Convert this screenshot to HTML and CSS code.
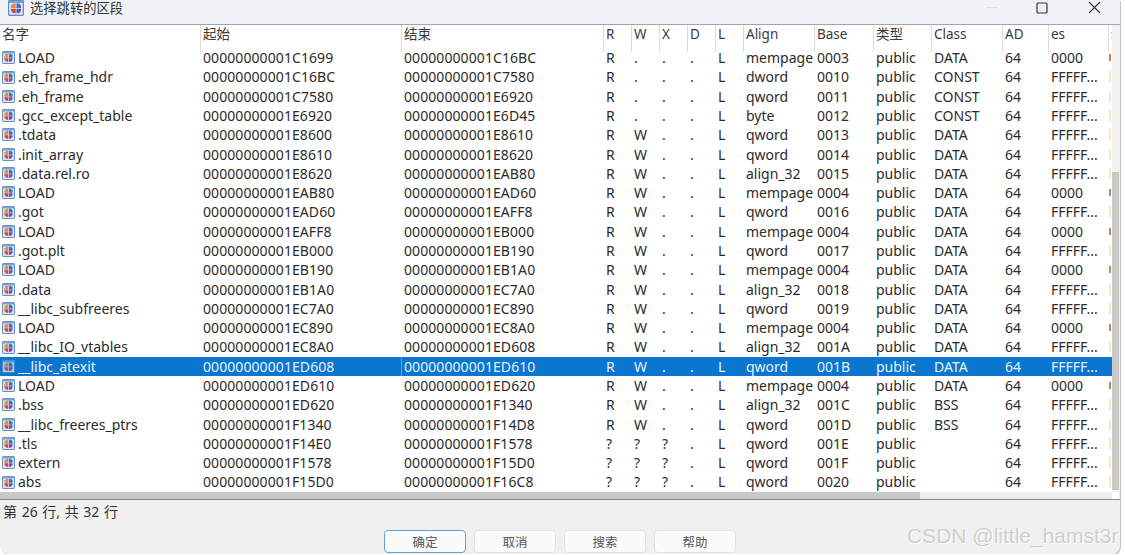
FILE: index.html
```html
<!DOCTYPE html>
<html lang="zh-CN">
<head>
  <meta charset="UTF-8">
  <meta name="viewport" content="width=device-width, initial-scale=1">
  <title>选择跳转的区段</title>
  <link rel="stylesheet" href="styles.css">
</head>
<body>

  <svg class="defs" width="0" height="0">
    <symbol id="seg" viewBox="0 0 16 16">
      <rect x="0.6" y="0.6" width="14.8" height="14.8" rx="0.8" fill="#dbe6f4" stroke="#5f8cc6" stroke-width="1.2"/>
      <rect x="1" y="1" width="14" height="2" fill="#7ba3d6"/>
      <path d="M7.7 3.4H5.2L3 5.6V8.2H7.7Z" fill="#ea8a3a"/>
      <path d="M8.5 3.4H11L13 5.6V8.2H8.5Z" fill="#3a72c6"/>
      <path d="M7.7 9H3V10.8L5.2 13.2H7.7Z" fill="#d9433a"/>
      <path d="M8.5 9H13V10.8L11 13.2H8.5Z" fill="#7a4aa6"/>
    </symbol>
  </svg>

  <div class="window">

    <div class="titlebar">
      <svg class="title-icon"><use href="#seg"/></svg>
      <span class="title-text">选择跳转的区段</span>
      <div class="caption">
        <svg class="cap-min" width="12" height="2"><rect width="12" height="1" fill="#dcdfe4"/></svg>
        <svg class="cap-max" width="12" height="12"><rect x="1" y="1" width="10" height="10" rx="1" fill="none" stroke="#333" stroke-width="1.2"/></svg>
        <svg class="cap-close" width="13" height="13"><path d="M1 1L12 12M12 1L1 12" stroke="#333" stroke-width="1.1"/></svg>
      </div>
    </div>

    <div class="list-wrap">
      <div class="list">
        <div class="head">
          <span>名字</span><span>起始</span><span>结束</span><span>R</span><span>W</span><span>X</span><span>D</span><span>L</span><span>Align</span><span>Base</span><span>类型</span><span>Class</span><span>AD</span><span>es</span><span>s</span>
        </div>
        <div class="rows">
          <div class="row"><span class="name"><svg class="icon"><use href="#seg"/></svg>LOAD</span><span>00000000001C1699</span><span>00000000001C16BC</span><span>R</span><span>.</span><span>.</span><span>.</span><span>L</span><span>mempage</span><span>0003</span><span>public</span><span>DATA</span><span>64</span><span>0000</span><i class="tick dark"></i></div>
          <div class="row"><span class="name"><svg class="icon"><use href="#seg"/></svg>.eh_frame_hdr</span><span>00000000001C16BC</span><span>00000000001C7580</span><span>R</span><span>.</span><span>.</span><span>.</span><span>L</span><span>dword</span><span>0010</span><span>public</span><span>CONST</span><span>64</span><span>FFFFF...</span><i class="tick"></i></div>
          <div class="row"><span class="name"><svg class="icon"><use href="#seg"/></svg>.eh_frame</span><span>00000000001C7580</span><span>00000000001E6920</span><span>R</span><span>.</span><span>.</span><span>.</span><span>L</span><span>qword</span><span>0011</span><span>public</span><span>CONST</span><span>64</span><span>FFFFF...</span><i class="tick"></i></div>
          <div class="row"><span class="name"><svg class="icon"><use href="#seg"/></svg>.gcc_except_table</span><span>00000000001E6920</span><span>00000000001E6D45</span><span>R</span><span>.</span><span>.</span><span>.</span><span>L</span><span>byte</span><span>0012</span><span>public</span><span>CONST</span><span>64</span><span>FFFFF...</span><i class="tick"></i></div>
          <div class="row"><span class="name"><svg class="icon"><use href="#seg"/></svg>.tdata</span><span>00000000001E8600</span><span>00000000001E8610</span><span>R</span><span>W</span><span>.</span><span>.</span><span>L</span><span>qword</span><span>0013</span><span>public</span><span>DATA</span><span>64</span><span>FFFFF...</span><i class="tick"></i></div>
          <div class="row"><span class="name"><svg class="icon"><use href="#seg"/></svg>.init_array</span><span>00000000001E8610</span><span>00000000001E8620</span><span>R</span><span>W</span><span>.</span><span>.</span><span>L</span><span>qword</span><span>0014</span><span>public</span><span>DATA</span><span>64</span><span>FFFFF...</span><i class="tick"></i></div>
          <div class="row"><span class="name"><svg class="icon"><use href="#seg"/></svg>.data.rel.ro</span><span>00000000001E8620</span><span>00000000001EAB80</span><span>R</span><span>W</span><span>.</span><span>.</span><span>L</span><span>align_32</span><span>0015</span><span>public</span><span>DATA</span><span>64</span><span>FFFFF...</span><i class="tick"></i></div>
          <div class="row"><span class="name"><svg class="icon"><use href="#seg"/></svg>LOAD</span><span>00000000001EAB80</span><span>00000000001EAD60</span><span>R</span><span>W</span><span>.</span><span>.</span><span>L</span><span>mempage</span><span>0004</span><span>public</span><span>DATA</span><span>64</span><span>0000</span><i class="tick dark"></i></div>
          <div class="row"><span class="name"><svg class="icon"><use href="#seg"/></svg>.got</span><span>00000000001EAD60</span><span>00000000001EAFF8</span><span>R</span><span>W</span><span>.</span><span>.</span><span>L</span><span>qword</span><span>0016</span><span>public</span><span>DATA</span><span>64</span><span>FFFFF...</span><i class="tick"></i></div>
          <div class="row"><span class="name"><svg class="icon"><use href="#seg"/></svg>LOAD</span><span>00000000001EAFF8</span><span>00000000001EB000</span><span>R</span><span>W</span><span>.</span><span>.</span><span>L</span><span>mempage</span><span>0004</span><span>public</span><span>DATA</span><span>64</span><span>0000</span><i class="tick dark"></i></div>
          <div class="row"><span class="name"><svg class="icon"><use href="#seg"/></svg>.got.plt</span><span>00000000001EB000</span><span>00000000001EB190</span><span>R</span><span>W</span><span>.</span><span>.</span><span>L</span><span>qword</span><span>0017</span><span>public</span><span>DATA</span><span>64</span><span>FFFFF...</span><i class="tick"></i></div>
          <div class="row"><span class="name"><svg class="icon"><use href="#seg"/></svg>LOAD</span><span>00000000001EB190</span><span>00000000001EB1A0</span><span>R</span><span>W</span><span>.</span><span>.</span><span>L</span><span>mempage</span><span>0004</span><span>public</span><span>DATA</span><span>64</span><span>0000</span><i class="tick dark"></i></div>
          <div class="row"><span class="name"><svg class="icon"><use href="#seg"/></svg>.data</span><span>00000000001EB1A0</span><span>00000000001EC7A0</span><span>R</span><span>W</span><span>.</span><span>.</span><span>L</span><span>align_32</span><span>0018</span><span>public</span><span>DATA</span><span>64</span><span>FFFFF...</span><i class="tick"></i></div>
          <div class="row"><span class="name"><svg class="icon"><use href="#seg"/></svg>__libc_subfreeres</span><span>00000000001EC7A0</span><span>00000000001EC890</span><span>R</span><span>W</span><span>.</span><span>.</span><span>L</span><span>qword</span><span>0019</span><span>public</span><span>DATA</span><span>64</span><span>FFFFF...</span><i class="tick"></i></div>
          <div class="row"><span class="name"><svg class="icon"><use href="#seg"/></svg>LOAD</span><span>00000000001EC890</span><span>00000000001EC8A0</span><span>R</span><span>W</span><span>.</span><span>.</span><span>L</span><span>mempage</span><span>0004</span><span>public</span><span>DATA</span><span>64</span><span>0000</span><i class="tick dark"></i></div>
          <div class="row"><span class="name"><svg class="icon"><use href="#seg"/></svg>__libc_IO_vtables</span><span>00000000001EC8A0</span><span>00000000001ED608</span><span>R</span><span>W</span><span>.</span><span>.</span><span>L</span><span>align_32</span><span>001A</span><span>public</span><span>DATA</span><span>64</span><span>FFFFF...</span><i class="tick"></i></div>
          <div class="row selected"><span class="name"><svg class="icon"><use href="#seg"/></svg>__libc_atexit</span><span>00000000001ED608</span><span class="focus">00000000001ED610</span><span>R</span><span>W</span><span>.</span><span>.</span><span>L</span><span>qword</span><span>001B</span><span>public</span><span>DATA</span><span>64</span><span>FFFFF...</span></div>
          <div class="row"><span class="name"><svg class="icon"><use href="#seg"/></svg>LOAD</span><span>00000000001ED610</span><span>00000000001ED620</span><span>R</span><span>W</span><span>.</span><span>.</span><span>L</span><span>mempage</span><span>0004</span><span>public</span><span>DATA</span><span>64</span><span>0000</span><i class="tick dark"></i></div>
          <div class="row"><span class="name"><svg class="icon"><use href="#seg"/></svg>.bss</span><span>00000000001ED620</span><span>00000000001F1340</span><span>R</span><span>W</span><span>.</span><span>.</span><span>L</span><span>align_32</span><span>001C</span><span>public</span><span>BSS</span><span>64</span><span>FFFFF...</span><i class="tick"></i></div>
          <div class="row"><span class="name"><svg class="icon"><use href="#seg"/></svg>__libc_freeres_ptrs</span><span>00000000001F1340</span><span>00000000001F14D8</span><span>R</span><span>W</span><span>.</span><span>.</span><span>L</span><span>qword</span><span>001D</span><span>public</span><span>BSS</span><span>64</span><span>FFFFF...</span><i class="tick"></i></div>
          <div class="row"><span class="name"><svg class="icon"><use href="#seg"/></svg>.tls</span><span>00000000001F14E0</span><span>00000000001F1578</span><span>?</span><span>?</span><span>?</span><span>.</span><span>L</span><span>qword</span><span>001E</span><span>public</span><span></span><span>64</span><span>FFFFF...</span><i class="tick"></i></div>
          <div class="row"><span class="name"><svg class="icon"><use href="#seg"/></svg>extern</span><span>00000000001F1578</span><span>00000000001F15D0</span><span>?</span><span>?</span><span>?</span><span>.</span><span>L</span><span>qword</span><span>001F</span><span>public</span><span></span><span>64</span><span>FFFFF...</span><i class="tick"></i></div>
          <div class="row"><span class="name"><svg class="icon"><use href="#seg"/></svg>abs</span><span>00000000001F15D0</span><span>00000000001F16C8</span><span>?</span><span>?</span><span>?</span><span>.</span><span>L</span><span>qword</span><span>0020</span><span>public</span><span></span><span>64</span><span>FFFFF...</span><i class="tick"></i></div>
        </div>
        <div class="hscroll"><div class="hthumb"></div></div>
      </div>
      <div class="vscroll"><div class="vthumb"></div><div class="grip"></div></div>
    </div>

    <div class="status">第 26 行, 共 32 行</div>

    <div class="buttons">
      <button class="btn default">确定</button>
      <button class="btn">取消</button>
      <button class="btn">搜索</button>
      <button class="btn">帮助</button>
    </div>

    <div class="watermark">CSDN @little_hamst3r</div>
  </div>

</body>
</html>
```

FILE: styles.css
```css
* {
  box-sizing: border-box;
}

body {
  margin: 0;
  background: #fff;
  color: #2b2b2b;
  font-family: "Noto Sans", "Noto Sans CJK SC", sans-serif;
  overflow: hidden;
}

.defs {
  display: block;
  height: 0;
}

.window {
  position: relative;
  display: flex;
  flex-direction: column;
  width: 1120px;
  height: 554px;
  background: #f0f0f0;
  border-radius: 0 0 8px 8px;
  box-shadow: 1px 1px 0 #c4c4c4;
  overflow: hidden;
}

/* title bar */
.titlebar {
  display: flex;
  align-items: flex-start;
  flex: none;
  height: 25px;
  background: #eff3f8;
  border-bottom: 1px solid #a3a5a8;
  padding-left: 8px;
}

.title-icon {
  width: 16px;
  height: 16px;
  margin-top: 0;
}

.title-text {
  margin-left: 6px;
  font-size: 13.3px;
  line-height: 16px;
  color: #333;
}

.caption {
  display: flex;
  align-items: flex-start;
  margin-left: auto;
  padding-right: 19px;
}

.cap-min {
  margin-top: 7px;
  margin-right: 38px;
}

.cap-max {
  margin-top: 2px;
  margin-right: 40px;
}

.cap-close {
  margin-top: 1px;
}

/* list */
.list-wrap {
  display: flex;
  flex: none;
  height: 475px;
  border-bottom: 1px solid #8a8a8a;
}

.list {
  display: flex;
  flex-direction: column;
  width: 1112px;
  background: #fff;
}

.head, .row {
  display: grid;
  grid-template-columns: 200px 201px 202px 28px 28px 28px 28px 28px 71px 59px 58px 71px 46px 60px 4px;
  white-space: nowrap;
}

.head {
  flex: none;
  height: 27px;
  font-size: 13.5px;
  line-height: 18px;
  color: #3a3a3a;
}

.head span {
  padding-left: 2px;
  border-left: 1px solid #dcdcdc;
  overflow: hidden;
}

.head span:first-child {
  border-left: none;
}

.rows {
  flex: none;
  margin-top: -3.8px;
}

.row {
  height: 19.29px;
  font-size: 14px;
  line-height: 19.29px;
}

.row span {
  padding-left: 3px;
  overflow: hidden;
}

.row span:nth-child(2), .row span:nth-child(3) {
  letter-spacing: 0.08px;
}

.row .name {
  display: flex;
  align-items: center;
  padding-left: 2px;
}

.icon {
  flex: none;
  width: 13px;
  height: 13px;
  margin-right: 3px;
}

.tick {
  width: 2px;
  height: 11px;
  margin: 4px 0 0 1px;
  background: #f8e6c2;
}

.tick.dark {
  height: 7px;
  margin-top: 6px;
  background: #c4865a;
}

.row.selected {
  background: #0a76cf;
  color: #e8f2fb;
}

.row.selected .icon {
  opacity: 0.75;
}

.row .focus {
  box-shadow: inset 1px 0 0 #5ea6e2;
}

/* scroll bars */
.hscroll {
  flex: 1;
  background: #eceded;
}

.hthumb {
  width: 920px;
  height: 100%;
  background: #c9c9c9;
}

.vscroll {
  display: flex;
  flex-direction: column;
  width: 7px;
  background: #f1f1f1;
  padding-top: 147px;
}

.vthumb {
  flex: 1;
  background: #c8c8c8;
}

.grip {
  flex: none;
  height: 7px;
  margin-top: 2px;
  background: #fff;
}

/* bottom */
.status {
  flex: none;
  height: 30px;
  padding-left: 3px;
  font-size: 14px;
  line-height: 23px;
  word-spacing: 1px;
  color: #333;
}

.buttons {
  display: flex;
  justify-content: flex-start;
  gap: 8px;
  padding-left: 384px;
}

.btn {
  width: 82px;
  height: 23px;
  padding: 0;
  background: #fbfbfb;
  border: 1px solid #e2e2e2;
  border-radius: 4px;
  font-family: "Noto Sans CJK SC", sans-serif;
  font-size: 12.5px;
  color: #555;
}

.btn.default {
  border: 1.5px solid #5fa3d8;
}

.watermark {
  position: absolute;
  left: 907px;
  top: 524px;
  font-family: "Liberation Sans", sans-serif;
  font-size: 21px;
  line-height: 23px;
  white-space: nowrap;
  color: #cfcfcf;
  text-shadow: 1px 1px 0 #fff;
}
```
